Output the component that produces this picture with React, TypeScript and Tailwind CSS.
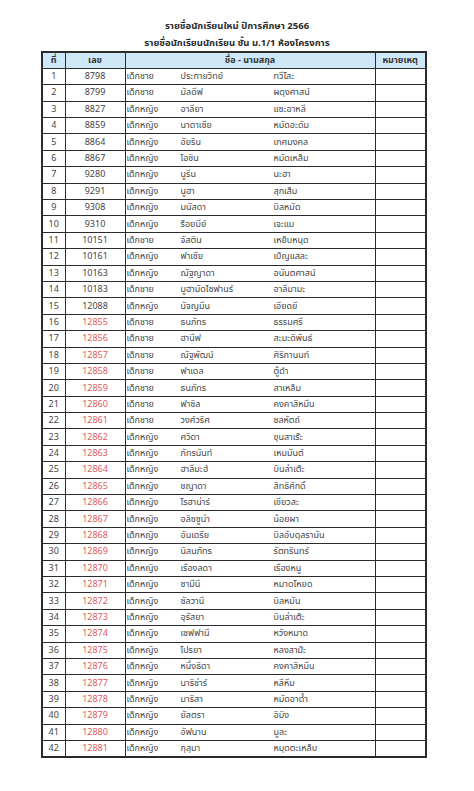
const students: [number, string, string, string, string][] = [
  [1, '8798', 'เด็กชาย', 'ประกายวิทย์', 'ทวีโสะ'],
  [2, '8799', 'เด็กชาย', 'มัลดีฟ', 'ผดุงศาสน์'],
  [3, '8827', 'เด็กหญิง', 'อาลียา', 'แซะอาหลี'],
  [4, '8859', 'เด็กหญิง', 'นาดาเซีย', 'หมัดอะดัม'],
  [5, '8864', 'เด็กหญิง', 'อัยริน', 'เกศมงคล'],
  [6, '8867', 'เด็กหญิง', 'ไอซิน', 'หมัดเหล็ม'],
  [7, '9280', 'เด็กหญิง', 'นูรีน', 'นะฮา'],
  [8, '9291', 'เด็กหญิง', 'นูฮา', 'สุกเส็ม'],
  [9, '9308', 'เด็กหญิง', 'มนัสดา', 'บิลหมัด'],
  [10, '9310', 'เด็กหญิง', 'ร็อยมีย์', 'เจะแม'],
  [11, '10151', 'เด็กชาย', 'จัสติน', 'เหย็บหนุด'],
  [12, '10161', 'เด็กหญิง', 'ฟาเซีย', 'เบ็ญแสละ'],
  [13, '10163', 'เด็กหญิง', 'ณัฐญาดา', 'อนันตศาสน์'],
  [14, '10183', 'เด็กชาย', 'มูฮามัดไซฟานร์', 'อาลีมามะ'],
  [15, '12088', 'เด็กหญิง', 'นัจญมีน', 'เอียดยี'],
  [16, '12855', 'เด็กชาย', 'ธนภัทร', 'ธรรมศรี'],
  [17, '12856', 'เด็กชาย', 'ฮานีฟ', 'สะมะดิพันธ์'],
  [18, '12857', 'เด็กชาย', 'ณัฐพัฒน์', 'ศิริภานนท์'],
  [19, '12858', 'เด็กชาย', 'ฟาเดล', 'ตู้ดำ'],
  [20, '12859', 'เด็กชาย', 'ธนภัทร', 'สาเหล็ม'],
  [21, '12860', 'เด็กชาย', 'ฟาซิล', 'คงคาสิหมีน'],
  [22, '12861', 'เด็กชาย', 'วงศ์วริศ', 'ชลหัตถ์'],
  [23, '12862', 'เด็กหญิง', 'ศวิดา', 'ขุนสาเร๊ะ'],
  [24, '12863', 'เด็กหญิง', 'ภัทรนันท์', 'เหมมันต์'],
  [25, '12864', 'เด็กหญิง', 'ฮาลีมะฮ์', 'บินล่าเต๊ะ'],
  [26, '12865', 'เด็กหญิง', 'ชญาดา', 'สิทธิศักดิ์'],
  [27, '12866', 'เด็กหญิง', 'ไรฮาน่าร์', 'เขียวสะ'],
  [28, '12867', 'เด็กหญิง', 'อลิซซูน่า', 'น้อยผา'],
  [29, '12868', 'เด็กหญิง', 'อันเดรีย', 'บิลอับดุลรามัน'],
  [30, '12869', 'เด็กหญิง', 'นิลนภัทร', 'รัตทรินทร์'],
  [31, '12870', 'เด็กหญิง', 'เรืองลดา', 'เรืองหนู'],
  [32, '12871', 'เด็กหญิง', 'ซามีนี', 'หมาดโหยด'],
  [33, '12872', 'เด็กหญิง', 'ซัลวานี', 'บิลหมัน'],
  [34, '12873', 'เด็กหญิง', 'อุรัสยา', 'บินล่าเต๊ะ'],
  [35, '12874', 'เด็กหญิง', 'เซฟฟานี', 'หวังหมาด'],
  [36, '12875', 'เด็กหญิง', 'ไปรยา', 'หลงสาม๊ะ'],
  [37, '12876', 'เด็กหญิง', 'หนึ่งธิดา', 'คงคาสิหมีน'],
  [38, '12877', 'เด็กหญิง', 'นาริซ่าร์', 'หลีหีม'],
  [39, '12878', 'เด็กหญิง', 'มาริสา', 'หมัดอาด้ำ'],
  [40, '12879', 'เด็กหญิง', 'ยัสตรา', 'อิมิง'],
  [41, '12880', 'เด็กหญิง', 'อัฟนาน', 'มูละ'],
  [42, '12881', 'เด็กหญิง', 'กุสุมา', 'หมุดตะเหล็บ'],
];

export default function App() {
  return (
    <main
      className="min-h-screen w-[474px] bg-white text-[#454545]"
      style={{ fontFamily: '"Noto Sans Thai", Tahoma, "Noto Sans", "DejaVu Sans", sans-serif' }}
    >
      <div className="pt-[18px] text-center font-bold text-[9.5px] leading-[16.5px] text-[#2a2a2a]">
        <p>รายชื่อนักเรียนใหม่ ปีการศึกษา 2566</p>
        <p>รายชื่อนักเรียนนักเรียน ชั้น ม.1/1 ห้องโครงการ</p>
      </div>

      <table className="ml-[41px] w-[384px] table-fixed border-collapse border-2 border-[#2b2b2b] text-[9px]">
        <colgroup>
          <col className="w-[23px]" />
          <col className="w-[60px]" />
          <col className="w-[250px]" />
          <col className="w-[51px]" />
        </colgroup>
        <thead>
          <tr className="h-[16.4px] bg-[#cfe8f8] text-[#333]">
            <th className="border border-[#2b2b2b] p-0 font-bold">ที่</th>
            <th className="border border-[#2b2b2b] p-0 font-bold">เลข</th>
            <th className="border border-[#2b2b2b] p-0 font-bold">ชื่อ - นามสกุล</th>
            <th className="border border-[#2b2b2b] p-0 font-bold">หมายเหตุ</th>
          </tr>
        </thead>
        <tbody>
          {students.map(([no, id, prefix, first, last]) => (
            <tr key={no} className="h-[16.4px]">
              <td className="border border-[#2b2b2b] p-0 text-center leading-none">{no}</td>
              <td
                className={`border border-[#2b2b2b] p-0 text-center leading-none ${no >= 16 ? 'text-[#e05a5a]' : ''}`}
              >
                {id}
              </td>
              <td className="border border-[#2b2b2b] p-0 leading-none">
                <div className="flex whitespace-nowrap">
                  <span className="w-[55px] pl-[1px]">{prefix}</span>
                  <span className="w-[93px]">{first}</span>
                  <span>{last}</span>
                </div>
              </td>
              <td className="border border-[#2b2b2b] p-0" />
            </tr>
          ))}
        </tbody>
      </table>
    </main>
  );
}
